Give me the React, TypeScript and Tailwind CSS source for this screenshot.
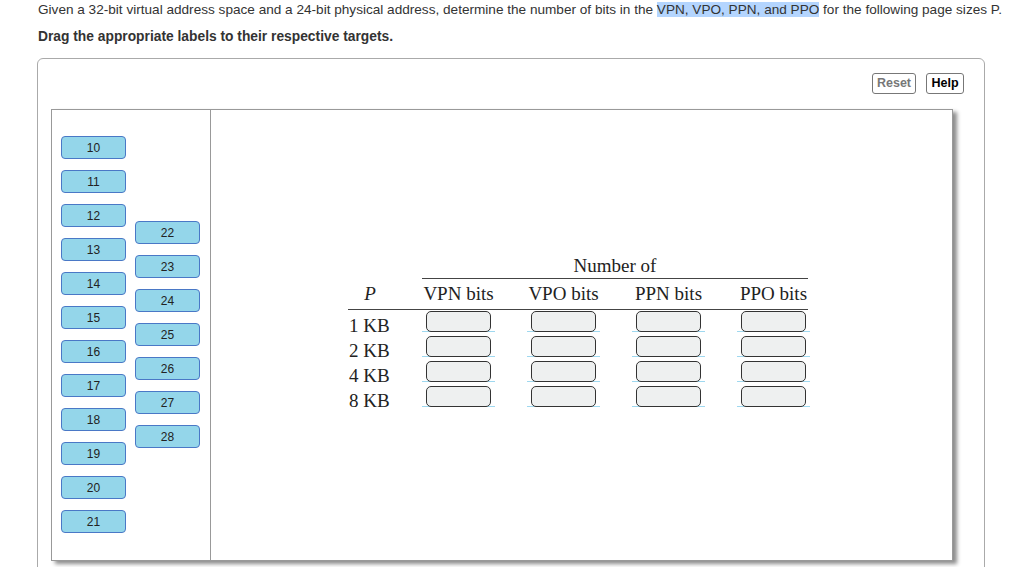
const sizes = ['1 KB', '2 KB', '4 KB', '8 KB'];
const columns = ['VPN bits', 'VPO bits', 'PPN bits', 'PPO bits'];
const leftLabels = ['10', '11', '12', '13', '14', '15', '16', '17', '18', '19', '20', '21'];
const rightLabels = ['22', '23', '24', '25', '26', '27', '28'];

const Label = ({ value }: { value: string }) => (
  <div className="flex h-[23px] w-[65px] items-center justify-center rounded-[4px] border border-[#4a78c6] bg-[#94d6ea] text-[12px] text-[#222]">
    {value}
  </div>
);

const DropTarget = () => (
  <div className="relative mx-auto mt-[1px] h-[21px] w-[65px]">
    <div className="absolute bottom-[0px] left-[-4px] right-[-4px] h-[1px] bg-[#9fd8ef]" />
    <div className="relative h-full w-full rounded-[5px] border border-[#333] bg-[#eef0f0]" />
  </div>
);

const App = () => {
  return (
    <div className="h-[567px] w-[1024px] overflow-hidden bg-white font-['Liberation_Sans',Arial,sans-serif] text-[#333]">
      {/* Question text */}
      <div className="pl-[38px] pt-[1px]">
        <p className="text-[13.6px] leading-[17px]">
          Given a 32-bit virtual address space and a 24-bit physical address, determine the number of bits in the{' '}
          <span className="bg-[#b4d5fe]">VPN, VPO, PPN, and PPO</span> for the following page sizes P.
        </p>
        <p className="mt-[10px] text-[13.8px] font-bold leading-[17px]">Drag the appropriate labels to their respective targets.</p>
      </div>

      {/* Exercise frame */}
      <div className="ml-[37px] mt-[13px] h-[520px] w-[948px] rounded-[6px] border border-[#aaa] px-[13px] pt-[14px]">
        <div className="flex justify-end gap-[10px] pr-[7px]">
          <button className="h-[21px] w-[44px] rounded-[3px] border border-[#777] text-center text-[12.5px] font-bold leading-[19px] text-[#777]">
            Reset
          </button>
          <button className="h-[21px] w-[38px] rounded-[3px] border border-[#777] text-center text-[12.5px] font-bold leading-[19px] text-black">
            Help
          </button>
        </div>

        {/* Canvas */}
        <div className="mt-[15px] flex h-[452px] w-[902px] border border-[#999] shadow-[4px_3px_4px_rgba(0,0,0,0.45)]">
          {/* Label bank */}
          <div className="flex w-[159px] gap-[9px] border-r border-[#999] pl-[9px] pt-[26px]">
            <div className="flex flex-col gap-[11px]">
              {leftLabels.map((v) => (
                <Label key={v} value={v} />
              ))}
            </div>
            <div className="mt-[85px] flex flex-col gap-[11px]">
              {rightLabels.map((v) => (
                <Label key={v} value={v} />
              ))}
            </div>
          </div>

          {/* Table */}
          <div className="flex-1 pl-[137px] pt-[143px] font-['Liberation_Serif','Times_New_Roman',serif] text-[19px] text-[#222]">
            <div className="ml-[74px] h-[26px] w-[386px] border-b border-[#444] text-center leading-[25px]">Number of</div>
            <div className="grid h-[31px] w-[460px] grid-cols-[58px_105px_105px_105px_105px] border-b border-[#444] leading-[29px]">
              <div className="pr-[14px] text-center italic">P</div>
              {columns.map((c) => (
                <div key={c} className="text-center">
                  {c}
                </div>
              ))}
            </div>
            {sizes.map((s) => (
              <div key={s} className="grid h-[25px] grid-cols-[58px_105px_105px_105px_105px]">
                <div className="pl-[1px] pt-[3px] leading-[25px]">{s}</div>
                {columns.map((c) => (
                  <DropTarget key={c} />
                ))}
              </div>
            ))}
          </div>
        </div>
      </div>
    </div>
  );
};

export default App;
